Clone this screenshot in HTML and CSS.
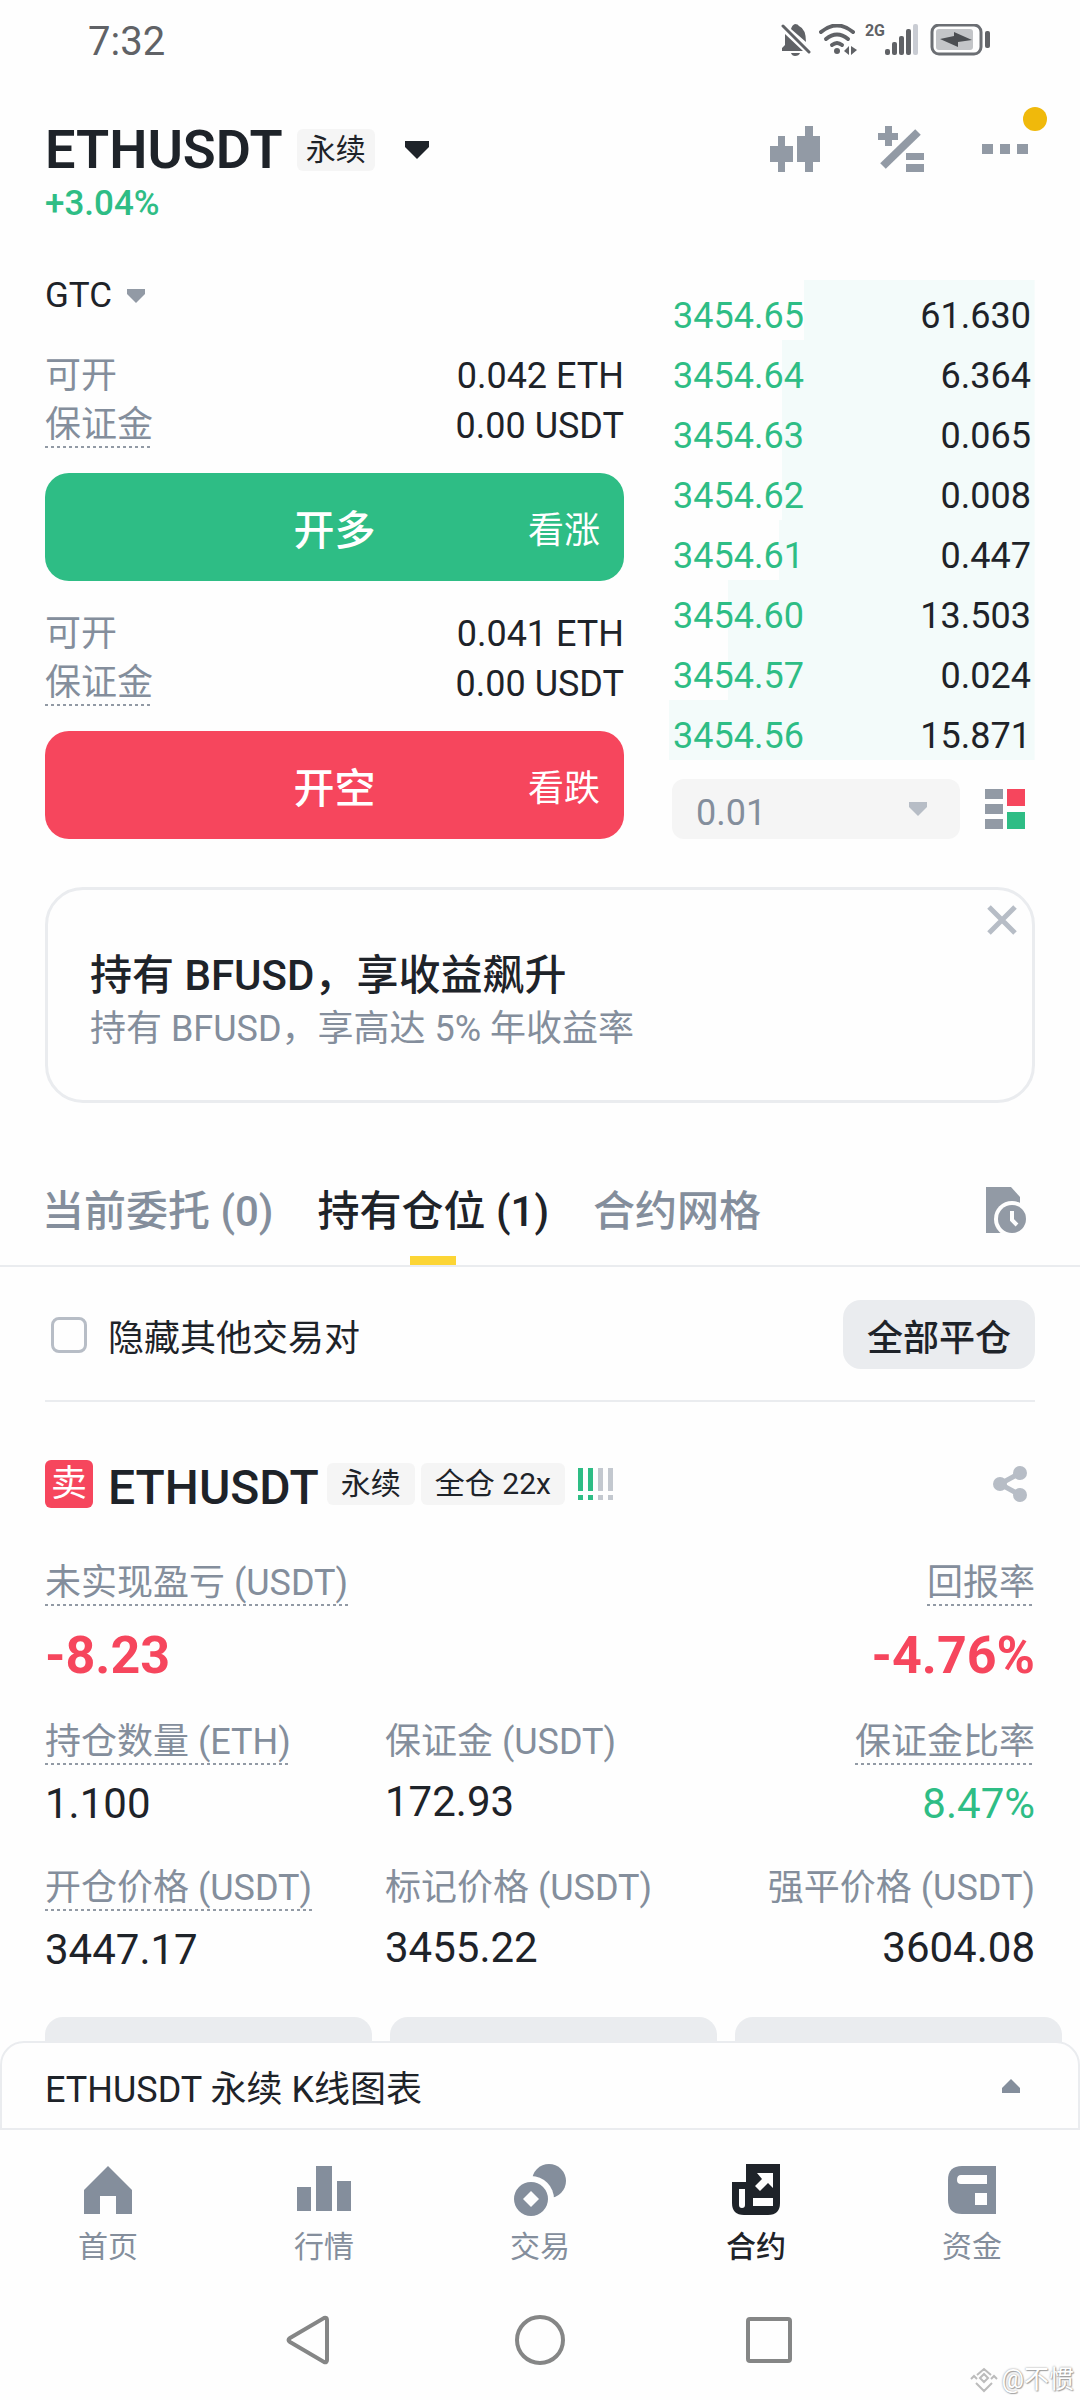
FILE: index.html
```html
<!DOCTYPE html>
<html lang="zh-CN">
<head>
  <meta charset="UTF-8">
  <meta name="viewport" content="width=device-width, initial-scale=1.0">
  <title>ETHUSDT 永续</title>
  <link rel="stylesheet" href="styles.css">
</head>
<body>
  <div class="status-bar">
    <span class="clock">7:32</span>
    <div class="status-icons">
      <svg class="bell" width="30" height="32" viewBox="0 0 30 32" fill="#606266">
        <path d="M4 10 L22 27 H1 V24 L4 21 Z"/>
        <path d="M10 5 Q11 1 14 0 Q17 0 18 2 Q25 5 25 18 Z"/>
        <path d="M10 29 H19 Q18 32 14 32 Q11 32 10 29 Z"/>
        <path d="M2 2 L28 28" stroke="#606266" stroke-width="3" stroke-linecap="round"/>
      </svg>
      <svg class="wifi" width="38" height="32" viewBox="0 0 38 32" fill="none" stroke="#606266" stroke-width="4" stroke-linecap="round">
        <path d="M2 8 Q18 -5 34 8"/>
        <path d="M7 15 Q18 6 29 15"/>
        <path d="M13 21 Q18 17 23 21"/>
        <circle cx="18" cy="27" r="3" fill="#606266" stroke="none"/>
        <path d="M30 22 V31 L25 27 Z M32 22 V31 L38 26 Z" fill="#606266" stroke="none"/>
      </svg>
      <span class="network">2G</span>
      <svg class="signal" width="33" height="32" viewBox="0 0 33 32" fill="#606266">
        <rect x="0" y="25" width="5" height="6" rx="2"/>
        <rect x="7" y="18" width="5" height="13" rx="2"/>
        <rect x="14" y="12" width="5" height="19" rx="2"/>
        <rect x="21" y="5" width="5" height="26" rx="2"/>
        <rect x="28" y="0" width="5" height="31" rx="2" fill="#c9ccd3"/>
      </svg>
      <svg width="60" height="32" viewBox="0 0 60 32">
        <rect x="2" y="1" width="49" height="29" rx="7" fill="none" stroke="#6b6e73" stroke-width="3"/>
        <rect x="6" y="5" width="37" height="21" rx="3" fill="#c3c5c8"/>
        <path d="M10 15 L24 12 V8 L42 16 L28 18 V23 Z" fill="#4b4e52"/>
        <rect x="55" y="7" width="5" height="17" rx="2" fill="#606266"/>
      </svg>
    </div>
  </div>

  <header class="header">
    <div>
      <button class="pair" type="button">
        <span class="pair-name">ETHUSDT</span>
        <span class="tag">永续</span>
        <svg class="pair-caret" width="24" height="18" viewBox="0 0 24 18" fill="#1e2329"><path d="M0 0 H24 V6 L12 18 L0 6 Z"/></svg>
      </button>
      <div class="change">+3.04%</div>
    </div>
    <div class="header-tools">
      <button type="button" aria-label="K线">
        <svg width="50" height="46" viewBox="0 0 50 46" fill="#929aa5"><path d="M0 20 H8 V10 H15 V20 H23 V36 H15 V46 H8 V36 H0 Z M27 10 H35 V0 H43 V10 H50 V36 H43 V46 H35 V36 H27 Z"/></svg>
      </button>
      <button type="button" aria-label="计算器">
        <svg width="46" height="46" viewBox="0 0 46 46" fill="#929aa5">
          <path d="M7 0 H14 V7 H20 V14 H14 V20 H7 V14 H0 V7 H7 Z M28 27 H46 V34 H28 Z M28 38 H46 V46 H28 Z"/>
          <path d="M5 40 L40 6" stroke="#929aa5" stroke-width="8"/>
        </svg>
      </button>
      <button class="more" type="button" aria-label="更多">
        <svg width="46" height="46" viewBox="0 0 46 46" fill="#929aa5"><path d="M0 18 H11 V28 H0 Z M18 18 H28 V28 H18 Z M35 18 H46 V28 H35 Z"/></svg>
      </button>
    </div>
  </header>

  <main>
    <section class="trade">
      <div class="order-form">
        <div class="tif">
          <select aria-label="有效方式"><option>GTC</option></select>
          <svg width="18" height="14" viewBox="0 0 18 14" fill="#929aa5"><path d="M0 0 H18 V5 L9 14 L0 5 Z"/></svg>
        </div>
        <div class="side">
          <div class="row"><span class="label">可开</span><span>0.042 ETH</span></div>
          <div class="row"><span class="label hint">保证金</span><span>0.00 USDT</span></div>
          <button class="order-btn long" type="button">开多<span>看涨</span></button>
        </div>
        <div class="side">
          <div class="row"><span class="label">可开</span><span>0.041 ETH</span></div>
          <div class="row"><span class="label hint">保证金</span><span>0.00 USDT</span></div>
          <button class="order-btn short" type="button">开空<span>看跌</span></button>
        </div>
      </div>

      <div class="book">
        <table class="bids">
          <tbody>
            <tr style="--depth: 63%"><td>3454.65</td><td>61.630</td></tr>
            <tr style="--depth: 69%"><td>3454.64</td><td>6.364</td></tr>
            <tr style="--depth: 69%"><td>3454.63</td><td>0.065</td></tr>
            <tr style="--depth: 69%"><td>3454.62</td><td>0.008</td></tr>
            <tr style="--depth: 70%"><td>3454.61</td><td>0.447</td></tr>
            <tr style="--depth: 84%"><td>3454.60</td><td>13.503</td></tr>
            <tr style="--depth: 84%"><td>3454.57</td><td>0.024</td></tr>
            <tr style="--depth: 100%"><td>3454.56</td><td>15.871</td></tr>
          </tbody>
        </table>
        <div class="book-tools">
          <div class="precision">
            <select aria-label="精度"><option>0.01</option></select>
            <svg width="18" height="14" viewBox="0 0 18 14" fill="#b7bdc6"><path d="M0 0 H18 V5 L9 14 L0 5 Z"/></svg>
          </div>
          <button type="button" aria-label="盘口显示">
            <svg width="40" height="40" viewBox="0 0 40 40">
              <path d="M0 0 H18 V10 H0 Z M0 15 H18 V25 H0 Z M0 30 H18 V40 H0 Z" fill="#929aa5"/>
              <rect x="22" y="0" width="18" height="17" fill="#f6465d"/>
              <rect x="22" y="23" width="18" height="17" fill="#2ebd85"/>
            </svg>
          </button>
        </div>
      </div>
    </section>

    <section class="promo">
      <h2>持有 BFUSD，享收益飙升</h2>
      <p>持有 BFUSD，享高达 5% 年收益率</p>
      <button class="close" type="button" aria-label="关闭">
        <svg width="30" height="30" viewBox="0 0 30 30" stroke="#b7bdc6" stroke-width="5"><path d="M2 2 L28 28 M28 2 L2 28"/></svg>
      </button>
    </section>

    <nav class="tabs">
      <button type="button">当前委托 (0)</button>
      <button class="active" type="button">持有仓位 (1)</button>
      <button type="button">合约网格</button>
      <a class="history" href="#" aria-label="历史记录">
        <svg width="42" height="46" viewBox="0 0 42 46">
          <path d="M0 0 H25 L34 10 V46 H0 Z" fill="#929aa5"/>
          <circle cx="26" cy="32" r="18" fill="#fefefe"/>
          <circle cx="26" cy="32" r="14" fill="#929aa5"/>
          <path d="M26 24 V33 L31 38" fill="none" stroke="#fefefe" stroke-width="4"/>
        </svg>
      </a>
    </nav>

    <div class="filter">
      <label><input type="checkbox">隐藏其他交易对</label>
      <button class="close-all" type="button">全部平仓</button>
    </div>

    <article class="position">
      <div class="position-head">
        <span class="sell">卖</span>
        <h3>ETHUSDT</h3>
        <span class="tag">永续</span>
        <span class="tag">全仓 22x</span>
        <svg class="adl" width="36" height="32" viewBox="0 0 36 32">
          <path d="M0 0 H5 V23 H0 Z M0 27 H5 V32 H0 Z M10 0 H15 V23 H10 Z M10 27 H15 V32 H10 Z" fill="#2ebd85"/>
          <path d="M20 0 H25 V23 H20 Z M20 27 H25 V32 H20 Z M30 0 H35 V23 H30 Z M30 27 H35 V32 H30 Z" fill="#c3c8cf"/>
        </svg>
        <button class="share" type="button" aria-label="分享">
          <svg width="34" height="36" viewBox="0 0 34 36" fill="#b7bdc6">
            <circle cx="27" cy="7" r="7"/><circle cx="7" cy="18" r="7"/><circle cx="27" cy="29" r="7"/>
            <path d="M27 7 L7 18 L27 29" fill="none" stroke="#b7bdc6" stroke-width="5"/>
          </svg>
        </button>
      </div>

      <dl class="pnl">
        <div><dt><span class="hint">未实现盈亏 (USDT)</span></dt><dd>-8.23</dd></div>
        <div><dt><span class="hint">回报率</span></dt><dd>-4.76%</dd></div>
      </dl>
      <dl class="stats">
        <div><dt><span class="hint">持仓数量 (ETH)</span></dt><dd>1.100</dd></div>
        <div><dt>保证金 (USDT)</dt><dd>172.93</dd></div>
        <div><dt><span class="hint">保证金比率</span></dt><dd class="up">8.47%</dd></div>
        <div><dt><span class="hint">开仓价格 (USDT)</span></dt><dd>3447.17</dd></div>
        <div><dt>标记价格 (USDT)</dt><dd>3455.22</dd></div>
        <div><dt>强平价格 (USDT)</dt><dd>3604.08</dd></div>
      </dl>

      <div class="actions">
        <button type="button" aria-label="杠杆"></button>
        <button type="button" aria-label="止盈止损"></button>
        <button type="button" aria-label="平仓"></button>
      </div>
    </article>
  </main>

  <button class="chart-sheet" type="button">
    <span>ETHUSDT 永续 K线图表</span>
    <svg width="18" height="14" viewBox="0 0 18 14" fill="#848e9c"><path d="M9 0 L18 9 V14 H0 V9 Z"/></svg>
  </button>

  <nav class="tab-bar">
    <a href="#">
      <svg width="52" height="52" viewBox="-2 -2 52 52" fill="#848e9c"><path d="M24 0 L48 24 V48 H32 V30 H16 V48 H0 V24 Z"/></svg>
      首页
    </a>
    <a href="#">
      <svg width="54" height="52" viewBox="0 -2 54 52" fill="#848e9c"><path d="M0 21 H14 V45 H0 Z M19 0 H35 V45 H19 Z M40 15 H54 V45 H40 Z"/></svg>
      行情
    </a>
    <a href="#">
      <svg width="52" height="52" viewBox="0 0 52 52" fill="#848e9c">
        <circle cx="35" cy="17" r="17"/>
        <circle cx="17" cy="35" r="23" fill="#fefefe"/>
        <path fill-rule="evenodd" d="M17 18 A17 17 0 1 1 17 52 A17 17 0 1 1 17 18 Z M17 27 L9 35 L17 43 L25 35 Z"/>
      </svg>
      交易
    </a>
    <a class="active" href="#">
      <svg width="48" height="52" viewBox="0 0 48 52">
        <path d="M14 0 H48 V39 Q48 51 36 51 H12 Q0 51 0 39 V18 H14 Z" fill="#1e2329"/>
        <path d="M7 25 H13 V41 Q13 44 10 44 Q7 44 7 41 Z M21 34 H41 V42 H21 Z M25 9 H41 V24 L36 19 L28 27 L23 22 L30 15 Z" fill="#fefefe"/>
      </svg>
      合约
    </a>
    <a href="#">
      <svg width="48" height="52" viewBox="0 -2 48 52">
        <path d="M14 0 H48 V48 H14 Q0 48 0 34 V14 Q0 0 14 0 Z" fill="#848e9c"/>
        <path d="M13 9 H39 V18 H13 Q9 18 9 14 Q9 9 13 9 Z M27 27 H39 V39 H27 Z" fill="#fefefe"/>
      </svg>
      资金
    </a>
  </nav>

  <footer class="system-nav">
    <button type="button" aria-label="返回">
      <svg width="50" height="50" viewBox="0 0 50 50"><path d="M6 23 L40 3 Q43 2 43 5 V45 Q43 48 40 47 L6 27 Q3 25 6 23 Z"/></svg>
    </button>
    <button type="button" aria-label="主屏幕">
      <svg width="50" height="50" viewBox="0 0 50 50"><circle cx="25" cy="25" r="23"/></svg>
    </button>
    <button type="button" aria-label="最近任务">
      <svg width="50" height="50" viewBox="0 0 50 50"><rect x="2" y="4" width="42" height="42" rx="2"/></svg>
    </button>
    <div class="watermark">
      <svg width="28" height="26" viewBox="0 0 28 26" fill="none" stroke="#bcbcbc" stroke-width="2"><path d="M7 8 L14 2 L21 8 M1 12 L4 9 L7 12 M21 12 L24 9 L27 12 M10 11 L14 7 L18 11 L14 15 Z M6 16 L14 24 L22 16"/></svg>
      @不惯
    </div>
  </footer>
</body>
</html>
```

FILE: styles.css
```css
* {
  box-sizing: border-box;
}
body {
  margin: 0;
  background: #fefefe;
  color: #1e2329;
  font-family: Roboto, "Noto Sans CJK SC", sans-serif;
  font-size: 36px;
  overflow-x: hidden;
}
button, select {
  margin: 0;
  padding: 0;
  border: 0;
  background: none;
  color: inherit;
  font: inherit;
  cursor: pointer;
}
select {
  appearance: none;
  outline: none;
}
a {
  color: inherit;
  text-decoration: none;
}
svg {
  display: block;
}
h2, h3, p, dl, dd {
  margin: 0;
}

/* status bar */
.status-bar {
  display: flex;
  justify-content: space-between;
  padding: 24px 90px 0 88px;
  height: 83px;
  color: #606266;
}
.clock {
  font-size: 40px;
  line-height: 36px;
}
.status-icons {
  display: flex;
}
.bell, .wifi {
  margin-right: 8px;
}
.network {
  font-size: 16px;
  font-weight: 700;
  line-height: 14px;
}
.signal {
  margin-right: 12px;
}

/* header */
.header {
  display: flex;
  justify-content: space-between;
  padding: 37px 52px 0 45px;
}
.pair {
  display: flex;
  align-items: center;
  line-height: 60px;
}
.pair-name {
  font-size: 54px;
  font-weight: 600;
}
.tag {
  padding: 0 14px;
  border-radius: 6px;
  background: #f5f5f5;
  font-size: 30px;
  line-height: 42px;
}
.pair .tag {
  margin: 0 30px 0 14px;
  padding: 0 9px;
}
.change {
  color: #2ebd85;
  font-size: 35px;
  font-weight: 500;
  line-height: 48px;
}
.header-tools {
  display: flex;
  align-items: flex-start;
  gap: 58px;
  padding-top: 6px;
}
.more {
  position: relative;
}
.more::after {
  content: "";
  position: absolute;
  top: -19px;
  right: -19px;
  width: 24px;
  height: 24px;
  border-radius: 50%;
  background: #f0b90b;
}

/* order form + order book */
.trade {
  display: grid;
  grid-template-columns: 579fr 366fr;
  gap: 45px;
  margin: 52px 45px 0;
}
.tif {
  display: flex;
  align-items: center;
  gap: 14px;
  margin-bottom: 39px;
  font-size: 35px;
  line-height: 32px;
}
.side + .side {
  margin-top: 28px;
}
.row {
  display: flex;
  justify-content: space-between;
  align-items: center;
  line-height: 50px;
}
.label {
  color: #848e9c;
}
.hint {
  display: inline-block;
  padding-bottom: 2px;
  background: repeating-linear-gradient(to right, #929aa5 0 3px, transparent 3px 6px) no-repeat bottom / 100% 2px;
  line-height: 42px;
}
.order-btn {
  position: relative;
  width: 100%;
  height: 108px;
  margin-top: 22px;
  border-radius: 24px;
  color: #fff;
  font-size: 41px;
  font-weight: 500;
}
.order-btn span {
  position: absolute;
  top: 0;
  right: 24px;
  font-size: 36px;
  font-weight: 400;
  line-height: 116px;
}
.long {
  background: #2ebd85;
}
.short {
  background: #f6465d;
}
.bids {
  width: 100%;
  border-collapse: collapse;
}
.bids tr {
  background: linear-gradient(#f3fbfa, #f3fbfa) no-repeat right / var(--depth) 100%;
}
.bids td {
  height: 60px;
  padding: 12px 4px 0;
  line-height: 48px;
}
.bids td:first-child {
  color: #2ebd85;
}
.bids td:last-child {
  text-align: right;
}
.book-tools {
  display: flex;
  align-items: center;
  gap: 25px;
  margin: 19px 10px 0 3px;
}
.precision {
  position: relative;
  flex: 1;
}
.precision select {
  display: block;
  width: 100%;
  height: 60px;
  padding: 8px 24px 0;
  border-radius: 12px;
  background: #f5f5f5;
  color: #848e9c;
}
.precision svg {
  position: absolute;
  top: 23px;
  right: 33px;
  pointer-events: none;
}

/* promo card */
.promo {
  position: relative;
  margin: 48px 45px 0;
  padding: 58px 42px 46px;
  border: 3px solid #eaecef;
  border-radius: 38px;
}
.promo h2 {
  font-size: 42px;
  font-weight: 500;
  line-height: 56px;
}
.promo p {
  color: #848e9c;
  line-height: 50px;
}
.close {
  position: absolute;
  top: 15px;
  right: 15px;
}

/* tabs */
.tabs {
  display: flex;
  align-items: center;
  gap: 44px;
  margin-top: 67px;
  padding: 0 52px 0 42px;
  border-bottom: 2px solid #eaecef;
}
.tabs button {
  position: relative;
  padding: 12px 0 23px;
  color: #848e9c;
  font-size: 42px;
  font-weight: 500;
  line-height: 60px;
  white-space: nowrap;
}
.tabs .active {
  color: #1e2329;
}
.tabs .active::after {
  content: "";
  position: absolute;
  bottom: 0;
  left: 50%;
  width: 46px;
  height: 9px;
  margin-left: -23px;
  background: #fcd535;
}
.history {
  margin-left: auto;
  padding-bottom: 16px;
}
.filter {
  display: flex;
  justify-content: space-between;
  align-items: center;
  margin: 0 45px;
  padding: 33px 0 31px;
  border-bottom: 2px solid #eaecef;
}
.filter label {
  display: flex;
  align-items: center;
}
.filter input {
  appearance: none;
  width: 36px;
  height: 36px;
  margin: 0 21px 0 6px;
  border: 3px solid #b7bdc6;
  border-radius: 8px;
}
.close-all {
  height: 69px;
  padding: 0 24px;
  border-radius: 18px;
  background: #eaecef;
  font-weight: 500;
}

/* position */
.position {
  padding: 58px 45px 0;
}
.position-head {
  display: flex;
  align-items: center;
  height: 48px;
}
.sell {
  width: 48px;
  border-radius: 6px;
  background: #f6465d;
  color: #fff;
  text-align: center;
  line-height: 48px;
}
.position h3 {
  align-self: flex-end;
  margin: 0 8px 0 15px;
  font-size: 48px;
  font-weight: 500;
  line-height: 40px;
}
.tag + .tag {
  margin-left: 6px;
}
.adl {
  margin-left: 13px;
}
.share {
  margin: 0 8px 0 auto;
}
dt {
  color: #848e9c;
  line-height: 42px;
}
dt .hint {
  vertical-align: top;
}
.pnl {
  display: flex;
  justify-content: space-between;
  margin-top: 54px;
}
.pnl dd {
  margin-top: 20px;
  color: #f6465d;
  font-size: 52px;
  font-weight: 700;
  line-height: 60px;
}
.pnl div:last-child {
  text-align: right;
}
.stats {
  display: grid;
  grid-template-columns: 340fr 340fr 310fr;
  row-gap: 37px;
  margin-top: 35px;
}
.stats dt {
  white-space: nowrap;
}
.stats dd {
  margin-top: 13px;
  font-size: 42px;
  line-height: 52px;
}
.stats div:nth-child(3n) {
  text-align: right;
}
.stats .up {
  color: #2ebd85;
}
.actions {
  display: grid;
  grid-template-columns: repeat(3, 1fr);
  gap: 18px;
  margin: 41px -27px 0 0;
}
.actions button {
  height: 72px;
  border-radius: 18px;
  background: #eaecef;
}

/* bottom area */
.chart-sheet {
  position: relative;
  display: flex;
  justify-content: space-between;
  align-items: center;
  width: 100%;
  height: 89px;
  margin-top: -48px;
  padding: 0 58px 0 43px;
  border: 2px solid #eaecef;
  border-radius: 24px 24px 0 0;
  background: #fefefe;
}
.tab-bar {
  display: grid;
  grid-template-columns: repeat(5, 1fr);
  padding-top: 34px;
}
.tab-bar a {
  display: flex;
  flex-direction: column;
  align-items: center;
  gap: 13px;
  color: #848e9c;
  font-size: 30px;
  line-height: 36px;
}
.tab-bar .active {
  color: #1e2329;
  font-weight: 500;
}
.system-nav {
  position: relative;
  display: flex;
  justify-content: center;
  gap: 181px;
  padding: 50px 0 35px;
  fill: none;
  stroke: #858686;
  stroke-width: 4px;
}
.watermark {
  position: absolute;
  right: 6px;
  bottom: 4px;
  display: flex;
  align-items: center;
  gap: 4px;
  color: #fff;
  font-size: 25px;
  line-height: 32px;
  text-shadow: 0 0 2px #888, 1px 1px 1px #aaa;
}
```
